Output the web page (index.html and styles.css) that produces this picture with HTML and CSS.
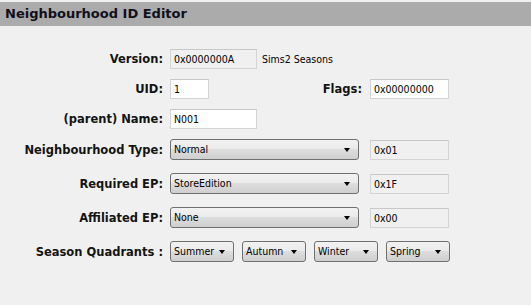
FILE: index.html
```html
<!DOCTYPE html>
<html lang="en">
<head>
    <meta charset="UTF-8">
    <title>Neighbourhood ID Editor</title>
    <link rel="stylesheet" href="styles.css">
</head>
<body>

    <div class="header">Neighbourhood ID Editor</div>

    <div class="form">
        <!-- Version -->
        <div class="row row-version">
            <label class="label">Version:</label>
            <input class="field readonly w-name" type="text" value="0x0000000A" readonly>
            <span class="note">Sims2 Seasons</span>
        </div>

        <!-- UID / Flags -->
        <div class="row">
            <label class="label">UID:</label>
            <input class="field w-uid" type="text" value="1">
            <label class="label label-flags">Flags:</label>
            <input class="field w-hex" type="text" value="0x00000000">
        </div>

        <div class="row">
            <label class="label">(parent) Name:</label>
            <input class="field w-name" type="text" value="N001">
        </div>

        <!-- EP selectors -->
        <div class="row row-combo">
            <label class="label">Neighbourhood Type:</label>
            <div class="combo w-combo"><span>Normal</span></div>
            <input class="field readonly w-hex" type="text" value="0x01" readonly>
        </div>

        <div class="row row-combo">
            <label class="label">Required EP:</label>
            <div class="combo w-combo"><span>StoreEdition</span></div>
            <input class="field readonly w-hex" type="text" value="0x1F" readonly>
        </div>

        <div class="row row-combo">
            <label class="label">Affiliated EP:</label>
            <div class="combo w-combo"><span>None</span></div>
            <input class="field readonly w-hex" type="text" value="0x00" readonly>
        </div>

        <div class="row row-combo">
            <label class="label">Season Quadrants :</label>
            <div class="seasons">
                <div class="combo w-season"><span>Summer</span></div>
                <div class="combo w-season"><span>Autumn</span></div>
                <div class="combo w-season"><span>Winter</span></div>
                <div class="combo w-season"><span>Spring</span></div>
            </div>
        </div>
    </div>

</body>
</html>
```

FILE: styles.css
```css
body {
    margin: 0;
    padding-top: 2px;
    background: #f0f0f0;
    font-family: "DejaVu Sans Condensed", "DejaVu Sans", Tahoma, sans-serif;
    font-size: 10.5px;
    color: #000;
}
.header {
    background: #ababab;
    height: 24px;
    line-height: 24px;
    padding-left: 5px;
    font-family: "DejaVu Sans", Tahoma, sans-serif;
    font-weight: bold;
    font-size: 13px;
    color: #10101c;
}
.form {
    padding-top: 23px;
}
.row {
    display: flex;
    align-items: center;
    height: 20px;
    margin-bottom: 10px;
}
.row-combo {
    height: 21px;
    margin-bottom: 13px;
}
.row-combo:nth-child(4) {
    margin-top: 1px;
}
.label {
    width: 170px;
    padding-right: 7px;
    box-sizing: border-box;
    text-align: right;
    font-family: "DejaVu Sans", Tahoma, sans-serif;
    font-weight: bold;
    font-size: 11.5px;
    color: #141414;
}
.label-flags {
    width: 161px;
    padding-right: 8px;
}
.field {
    box-sizing: border-box;
    height: 20px;
    margin: 0;
    padding: 0 3px;
    border: 1px solid #d4d4d4;
    border-top-color: #c8c8c8;
    background: #fff;
    font-family: inherit;
    font-size: 10.5px;
    color: #000;
    outline: none;
}
.readonly {
    background: #f0f0f0;
}
.w-name {
    width: 87px;
}
.w-uid {
    width: 39px;
}
.w-hex {
    width: 79px;
}
.note {
    margin-left: 5px;
}
.row-combo .field {
    margin-left: 11px;
}
.combo {
    position: relative;
    box-sizing: border-box;
    height: 21px;
    line-height: 19px;
    padding-left: 3px;
    border: 1px solid #707070;
    border-radius: 3px;
    background: linear-gradient(#f2f2f2, #ebebeb 45%, #dddddd 50%, #cfcfcf);
}
.combo::after {
    content: "";
    position: absolute;
    right: 8px;
    top: 8px;
    border-left: 3.5px solid transparent;
    border-right: 3.5px solid transparent;
    border-top: 4px solid #000;
}
.w-combo {
    width: 189px;
}
.w-season {
    width: 64px;
}
.seasons {
    display: flex;
    gap: 8px;
}
```
